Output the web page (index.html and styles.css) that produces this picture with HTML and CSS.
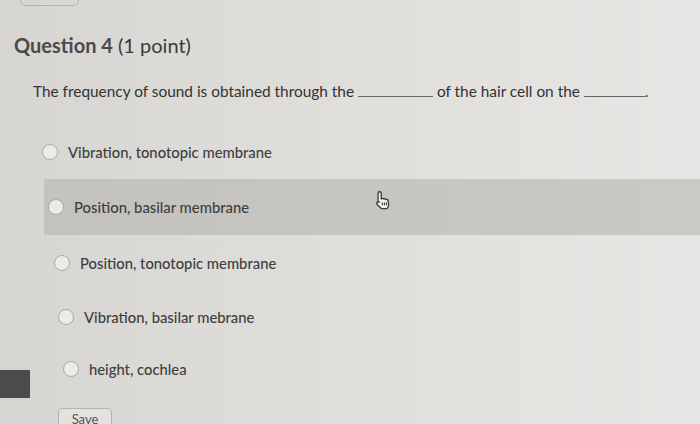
FILE: index.html
```html
<!DOCTYPE html>
<html>
<head>
<meta charset="utf-8">
<link rel="stylesheet" href="styles.css">
</head>
<body>
<div class="page">
  <div class="prev-btn"></div>
  <h2 class="q-title"><b>Question 4</b> (1 point)</h2>
  <p class="q-text">The frequency of sound is obtained through the <span class="blank b1"></span> of the hair cell on the <span class="blank b2"></span>.</p>
  <ul class="options">
    <li class="opt o1"><span class="radio"></span><span class="label">Vibration, tonotopic membrane</span></li>
    <li class="opt o2 hover"><span class="radio"></span><span class="label">Position, basilar membrane</span></li>
    <li class="opt o3"><span class="radio"></span><span class="label">Position, tonotopic membrane</span></li>
    <li class="opt o4"><span class="radio"></span><span class="label">Vibration, basilar mebrane</span></li>
    <li class="opt o5"><span class="radio"></span><span class="label">height, cochlea</span></li>
  </ul>
  <button class="save">Save</button>
  <div class="side-block"></div>
  <svg class="cursor" width="22" height="22" viewBox="0 0 20 20">
    <path d="M6 2.5c.9 0 1.5.6 1.5 1.4V9l.4-.1c.6-.6 1.7-.5 2 .3.6-.5 1.6-.4 1.9.4.6-.4 1.6-.2 1.8.6l.6 3.6c.2 1.3-.2 2.6-1.1 3.5l-.6.6H7.8L4 14.3c-.7-.7-.8-1.8-.1-2.4.6-.5 1.4-.4 2 .1l-1.3-.1V3.9c0-.8.6-1.4 1.4-1.4z" fill="#f1f1ef" stroke="#3a3a3a" stroke-width="1.2" stroke-linejoin="round"/>
    <path d="M8.6 12.2v2.6M10.4 12.2v2.6M12.2 12.2v2.6" stroke="#3a3a3a" stroke-width="1"/>
  </svg>
</div>
</body>
</html>
```
FILE: styles.css
```css
html, body {
  margin: 0;
  padding: 0;
  height: 100%;
  overflow: hidden;
}
body {
  background: linear-gradient(to right, #d6d5d2 0%, #dcdbd8 30%, #e2e1de 65%, #e7e6e4 100%);
  font-family: Lato, "Open Sans", sans-serif;
  color: #3c3c3c;
}
.page {
  position: relative;
  display: flow-root;
  height: 424px;
}
.prev-btn {
  margin-left: 20px;
  margin-top: -16px;
  width: 57px;
  height: 20px;
  border: 1px solid #b4b3b0;
  border-radius: 5px;
}
.q-title {
  margin: 27px 0 0 14px;
  font-size: 20px;
  font-weight: 400;
  line-height: 24px;
  color: #3a3a3a;
}
.q-title b {
  font-weight: 700;
  color: #4a4a4a;
}
.q-text {
  margin: 24px 0 0 33px;
  font-size: 15.4px;
  line-height: 20px;
  letter-spacing: 0;
  color: #333;
}
.blank {
  display: inline-block;
  border-bottom: 1px solid #666;
  vertical-align: baseline;
  height: 1px;
}
.b1 { width: 75px; }
.b2 { width: 61px; }
.options {
  list-style: none;
  margin: 22px 0 0;
  padding: 0;
}
.opt {
  display: flex;
  align-items: center;
  height: 55px;
  font-size: 14.8px;
  font-weight: 500;
  color: #3e3e3e;
}
.opt.o1 { padding-top: 2px; height: 54px; }
.radio {
  width: 14px;
  height: 14px;
  border-radius: 50%;
  border: 1px solid #aaa9a6;
  background: #ebebea;
  margin-right: 10px;
  flex: none;
}
.o1 { margin-left: 42px; }
.o2 {
  margin-left: 44px;
  padding-left: 4px;
  height: 56px;
  background: linear-gradient(to right, #c3c2bf 0%, #c6c5c2 50%, #cac9c6 100%);
}
.o3 { margin-left: 54px; }
.o4 { margin-left: 58px; height: 53px; }
.o5 { margin-left: 63px; height: 51px; }
.save {
  display: block;
  margin: 14px 0 0 58px;
  width: 54px;
  height: 28px;
  border: 1px solid #b4b3b0;
  border-radius: 4px;
  background: #e3e2e0;
  font-family: Lato, sans-serif;
  font-size: 13px;
  color: #555;
  padding-bottom: 8px;
}
.side-block {
  position: absolute;
  left: 0;
  top: 370px;
  width: 30px;
  height: 28px;
  background: #4a4b4d;
}
.cursor {
  position: absolute;
  left: 373px;
  top: 189px;
}
```
